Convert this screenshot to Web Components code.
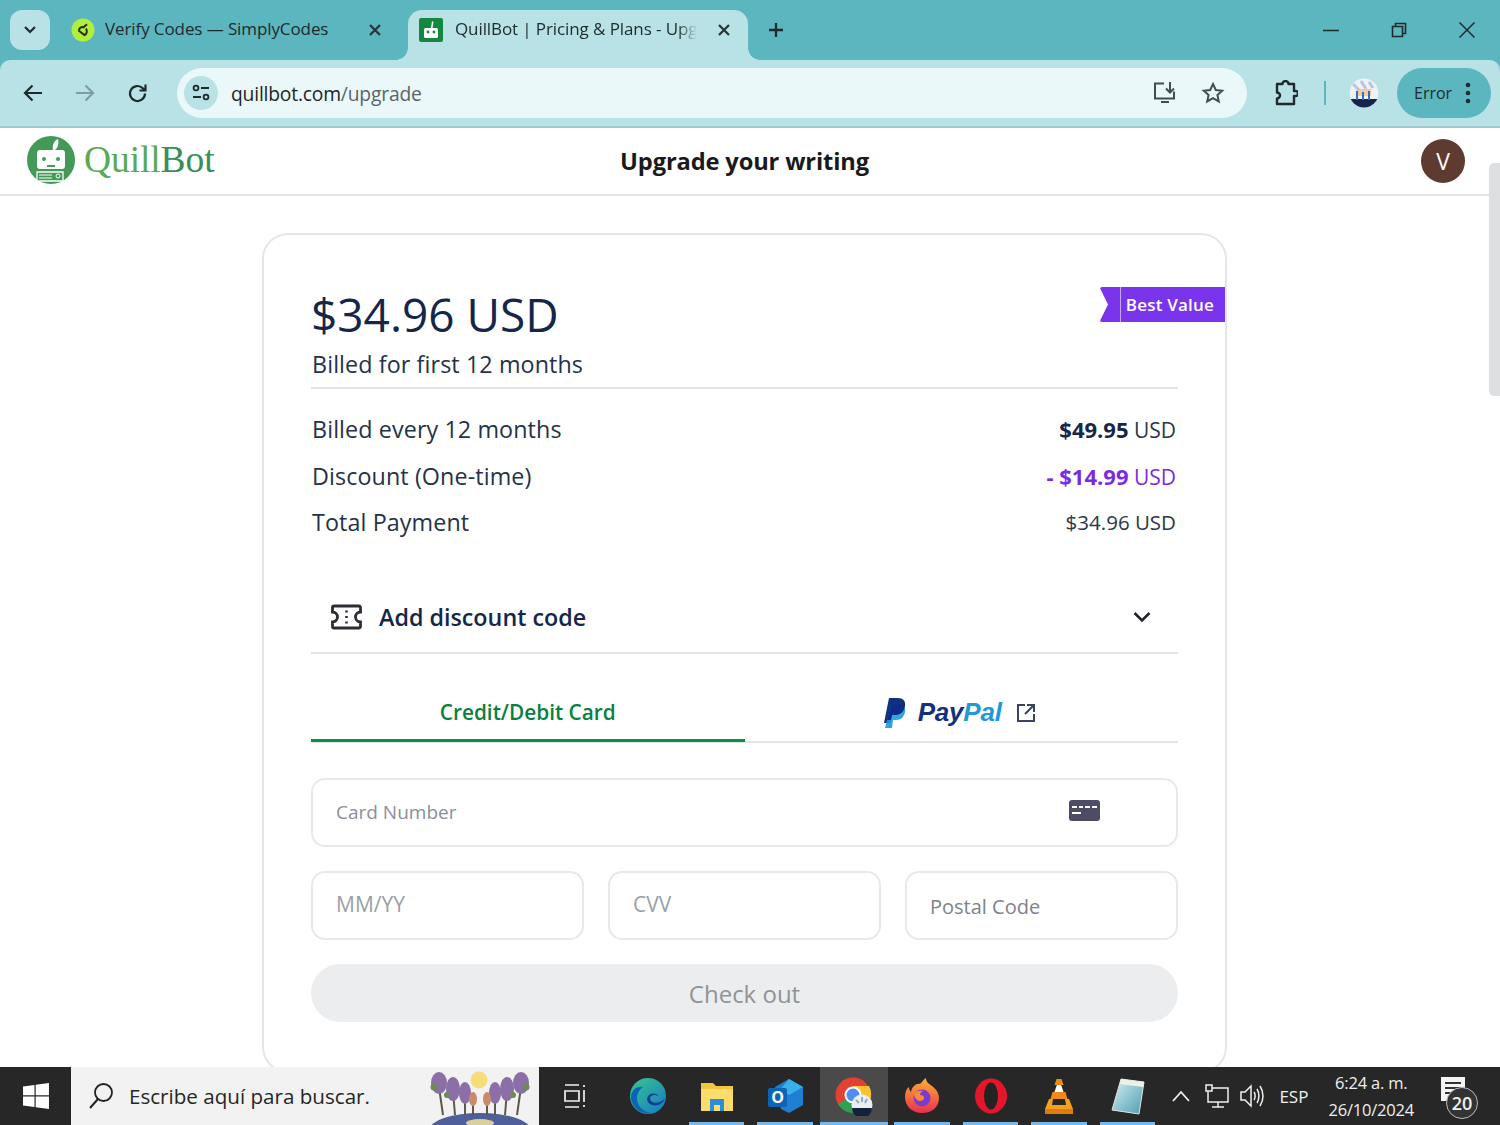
<!DOCTYPE html>
<html lang="es">
<head>
<meta charset="utf-8">
<title>QuillBot | Pricing & Plans</title>
<style>
  html, body { margin: 0; height: 100%; overflow: hidden; }
  body { display: flex; flex-direction: column; height: 1125px; font-family: "Open Sans", "Noto Sans", sans-serif; background: #fff; }
</style>
</head>
<body>
<chrome-tabs></chrome-tabs>
<chrome-toolbar></chrome-toolbar>
<page-view>
  <quill-header></quill-header>
  <checkout-card></checkout-card>
</page-view>
<win-taskbar></win-taskbar>

<script>
class ChromeTabs extends HTMLElement {
    constructor(){
        super()
        this.attachShadow({mode: 'open'})
        this.shadowRoot.innerHTML = `
        <style>
        :host{ display:flex; align-items:flex-end; height:60px; color:#1f2a2c; font-size:17px; font-family:"Open Sans",sans-serif; flex:none; position:relative; z-index:1; background:#5cb6c0; }
        .menu{ width:40px; height:40px; margin:0 0 10px 10px; border-radius:12px; background:#b8e2e6; display:flex; align-items:center; justify-content:center; flex:none; }
        .tab{ display:flex; align-items:center; height:50px; flex:none; box-sizing:border-box; padding-bottom:10px; }
        .tab span{ white-space:nowrap; overflow:hidden; letter-spacing:-.1px; margin-top:-3px; }
        .one{ width:358px; padding-left:21px; }
        .one span{ width:225px; margin-left:10px; }
        .one .x{ margin-left:38px; }
        .two{ width:340px; padding-left:11px; background:#b8e2e6; border-radius:14px 14px 0 0; position:relative; }
        .two::before, .two::after{ content:""; position:absolute; bottom:0; width:12px; height:12px; }
        .two::before{ left:-12px; background:radial-gradient(circle at 0 0, #5cb6c0 11.500px, #b8e2e6 12px); }
        .two::after{ right:-12px; background:radial-gradient(circle at 100% 0, #5cb6c0 11.500px, #b8e2e6 12px); }
        .two span{ width:242px; margin-left:12px; -webkit-mask-image:linear-gradient(90deg,#000 92%,transparent); mask-image:linear-gradient(90deg,#000 92%,transparent); }
        .two .x{ margin-left:20px; }
        .x{ flex:none; }
        .plus{ margin:0 0 22px 20px; flex:none; }
        .win{ margin-left:auto; display:flex; align-items:center; gap:52px; padding:0 25px 22px 0; }
        svg{ display:block; flex:none; }
        </style>
        <div class="menu"><svg width="14" height="10" viewBox="0 0 14 10"><path d="M2 2l5 5 5-5" fill="none" stroke="#1f2a2c" stroke-width="2.200"/></svg></div>
        <div class="tab one">
            <svg width="24" height="24" viewBox="0 0 24 24"><circle cx="12" cy="12" r="11.500" fill="#b2ee3c"/><path d="M8 12.500c0-2.500 2.500-4 4.500-3.200l3.500-3" fill="none" stroke="#243015" stroke-width="2"/><path d="M7.500 12.500l6 4.500c2.500-1 3-4 1.500-6.500" fill="none" stroke="#243015" stroke-width="2"/></svg>
            <span>Verify Codes — SimplyCodes</span>
            <svg class="x" width="14" height="14" viewBox="0 0 14 14"><path d="M2 2l10 10M12 2L2 12" stroke="#2b3436" stroke-width="2.300"/></svg>
        </div>
        <div class="tab two">
            <svg width="24" height="24" viewBox="0 0 24 24"><rect width="24" height="24" rx="2" fill="#14883f"/><rect x="5" y="10" width="14" height="10" rx="1.500" fill="#fff"/><path d="M12 10l1-7 1.500 1-1 6z" fill="#fff"/><circle cx="9" cy="14" r="1.400" fill="#14883f"/><circle cx="15" cy="14" r="1.400" fill="#14883f"/></svg>
            <span>QuillBot | Pricing &amp; Plans - Upg</span>
            <svg class="x" width="14" height="14" viewBox="0 0 14 14"><path d="M2 2l10 10M12 2L2 12" stroke="#2b3436" stroke-width="2.300"/></svg>
        </div>
        <svg class="plus" width="16" height="16" viewBox="0 0 16 16"><path d="M8 1v14M1 8h14" stroke="#1f2a2c" stroke-width="2.300"/></svg>
        <div class="win">
            <svg width="16" height="16" viewBox="0 0 16 16"><path d="M0 8.500h16" stroke="#1f2a2c" stroke-width="1.500"/></svg>
            <svg width="16" height="16" viewBox="0 0 16 16"><path d="M1.500 4.500h10v10h-10zM4.500 4.500V1.500h10v10h-3" fill="none" stroke="#1f2a2c" stroke-width="1.600"/></svg>
            <svg width="16" height="16" viewBox="0 0 16 16"><path d="M.5.5l15 15M15.500.5l-15 15" stroke="#1f2a2c" stroke-width="1.500"/></svg>
        </div>`
    }
}
customElements.define('chrome-tabs', ChromeTabs)

class ChromeToolbar extends HTMLElement {
    constructor(){
        super()
        this.attachShadow({mode: 'open'})
        this.shadowRoot.innerHTML = `
        <style>
        :host{ display:flex; align-items:center; height:68px; box-sizing:border-box; background:#b8e2e6; border-bottom:2px solid #a3c9d0; border-radius:10px 10px 0 0; box-shadow:0 -10px 0 #5cb6c0; padding:0 8px 0 22px; flex:none; font-family:"Open Sans",sans-serif; }
        svg{ display:block; flex:none; }
        .nav{ display:flex; gap:30px; align-items:center; }
        .reload{ margin-left:1px; }
        .bar{ margin-left:28px; width:1070px; height:50px; border-radius:25px; background:#ebf8f9; display:flex; align-items:center; padding:0 22px 0 7px; box-sizing:border-box; flex:none; }
        .site{ width:34px; height:34px; border-radius:50%; background:#b8e2e6; display:flex; align-items:center; justify-content:center; flex:none; }
        .url{ margin-left:13px; font-size:19.300px; color:#1e2426; letter-spacing:-.2px; }
        .url span{ color:#5b6567; }
        .end{ margin-left:auto; display:flex; align-items:center; gap:23px; }
        .right{ display:flex; align-items:center; margin-left:27px; }
        .sep{ width:2px; height:24px; background:#5cb6c0; margin:0 23px 0 26px; }
        .err{ margin-left:18px; width:94px; height:50px; border-radius:25px; background:#5cb6c0; display:flex; align-items:center; justify-content:space-between; padding:0 20px 0 17px; box-sizing:border-box; font-size:16px; color:#1f2a2c; }
        </style>
        <div class="nav">
            <svg width="22" height="20" viewBox="0 0 22 20"><path d="M20 10H3M10.500 2.500L3 10l7.500 7.500" fill="none" stroke="#1f2a2c" stroke-width="2.200"/></svg>
            <svg width="22" height="20" viewBox="0 0 22 20"><path d="M2 10h17M11.500 2.500L19 10l-7.500 7.500" fill="none" stroke="#7f9da2" stroke-width="2.200"/></svg>
            <svg class="reload" width="22" height="22" viewBox="0 0 22 22"><path d="M18 11.500a7.500 7.500 0 1 1-2.200-5.300L18 8.500M18.500 2.500v6h-6" fill="none" stroke="#1f2a2c" stroke-width="2.200"/></svg>
        </div>
        <div class="bar">
            <div class="site"><svg width="20" height="20" viewBox="0 0 20 20"><circle cx="5" cy="5" r="2.400" fill="none" stroke="#1f2a2c" stroke-width="1.800"/><path d="M10 5h8M2 14h8" stroke="#1f2a2c" stroke-width="1.800"/><circle cx="15" cy="14" r="2.400" fill="none" stroke="#1f2a2c" stroke-width="1.800"/></svg></div>
            <div class="url">quillbot.com<span>/upgrade</span></div>
            <div class="end">
                <svg width="26" height="26" viewBox="0 0 26 26"><path d="M12 3.500H3v15h19v-7M9 22h8" fill="none" stroke="#444c4e" stroke-width="2"/><path d="M18 2v10M14 8.500l4 4 4-4" fill="none" stroke="#444c4e" stroke-width="2"/></svg>
                <svg width="24" height="24" viewBox="0 0 24 24"><path d="M12 3l2.800 6 6.400.7-4.800 4.300 1.400 6.400L12 17.100l-5.800 3.300 1.400-6.400L2.800 9.700 9.200 9z" fill="none" stroke="#444c4e" stroke-width="2"/></svg>
            </div>
        </div>
        <div class="right">
            <svg width="24" height="26" viewBox="0 0 24 26"><path d="M3 4h5.500a3 3 0 0 1 6 0H20v7h1.500a2.500 2.500 0 0 1 0 5H20v8H3v-5.500a3 3 0 0 0 0-6z" fill="none" stroke="#1f2a2c" stroke-width="2.400" stroke-linejoin="round"/></svg>
            <div class="sep"></div>
            <svg width="30" height="30" viewBox="0 0 30 30"><defs><clipPath id="p"><circle cx="15" cy="15" r="14.500"/></clipPath></defs><g clip-path="url(#p)"><rect width="30" height="30" fill="#eef1f6"/><path d="M4 6l6 6M12 3l5 8M20 4l4 6" stroke="#b6c6de" stroke-width="3"/><rect x="8" y="11" width="14" height="7" fill="#f2b36b" opacity=".6"/><rect y="21" width="30" height="9" fill="#142450"/><path d="M8 13v9M14 14v8M20 13v9" stroke="#2f6fc0" stroke-width="2"/></g></svg>
            <div class="err">Error<svg width="6" height="22" viewBox="0 0 6 22"><circle cx="3" cy="3" r="2.300" fill="#1f2a2c"/><circle cx="3" cy="11" r="2.300" fill="#1f2a2c"/><circle cx="3" cy="19" r="2.300" fill="#1f2a2c"/></svg></div>
        </div>`
    }
}
customElements.define('chrome-toolbar', ChromeToolbar)

class PageView extends HTMLElement {
    constructor(){
        super()
        this.attachShadow({mode: 'open'})
        this.shadowRoot.innerHTML = `
        <style>
        :host{ display:flex; flex:none; height:939px; overflow:hidden; background:#fff; }
        .main{ width:1489px; flex:none; overflow:hidden; }
        .track{ flex:1; padding-top:35px; box-sizing:border-box; }
        .thumb{ height:233px; background:#dedfe1; border-radius:5px 0 0 5px; }
        </style>
        <div class="main"><slot></slot></div>
        <div class="track"><div class="thumb"></div></div>`
    }
}
customElements.define('page-view', PageView)

class QuillHeader extends HTMLElement {
    constructor(){
        super()
        this.attachShadow({mode: 'open'})
        this.shadowRoot.innerHTML = `
        <style>
        :host{ display:grid; grid-template-columns:1fr auto 1fr; align-items:center; height:68px; box-sizing:border-box; border-bottom:2px solid #e4e5e6; padding:0 24px 0 26px; }
        .logo{ display:flex; align-items:center; gap:8px; margin-top:-2px; }
        .word{ font-family:"Liberation Serif",serif; font-size:37.500px; line-height:1; letter-spacing:-.1px; color:#5aa956; }
        .word b{ font-weight:400; color:#3b8e5c; }
        h1{ margin:0 0 0 -2px; font-size:23.700px; font-weight:700; color:#1a1a1a; font-family:"Open Sans",sans-serif; letter-spacing:-.15px; }
        .avatar{ justify-self:end; width:44px; height:44px; border-radius:50%; background:#5e3a30; color:#fff; display:flex; align-items:center; justify-content:center; font-size:23px; }
        </style>
        <div class="logo">
            <svg width="50" height="50" viewBox="0 0 50 50"><circle cx="25" cy="25" r="24" fill="#429a56"/><path d="M27 15c-1-5 1-9 5-11 1 4 0 9-3 11z" fill="#fff"/><rect x="11" y="15" width="28" height="19" rx="3" fill="#fff"/><circle cx="18" cy="24" r="2" fill="#429a56"/><circle cx="32" cy="24" r="2" fill="#429a56"/><rect x="21" y="30" width="8" height="2" fill="#429a56"/><path d="M11 37h26v9H11z" fill="#429a56" stroke="#fff" stroke-width="1.300"/><circle cx="32" cy="41" r="2" fill="none" stroke="#fff"/><path d="M13 40h13M13 43h13" stroke="#fff"/></svg>
            <div class="word">Quill<b>Bot</b></div>
        </div>
        <h1>Upgrade your writing</h1>
        <div class="avatar">V</div>`
    }
}
customElements.define('quill-header', QuillHeader)

class PriceRow extends HTMLElement {
    constructor(){
        super()
        this.attachShadow({mode: 'open'})
        this.shadowRoot.innerHTML = `
        <style>
        :host{ display:flex; justify-content:space-between; align-items:center; height:46.500px; padding:0 2px 0 1px; color:#1b2a4a; }
        .l{ font-size:23.300px; color:#25324a; letter-spacing:.1px; }
        .r{ font-size:21px; color:#2b3648; }
        </style>
        <div class="l"><slot name="label"></slot></div>
        <div class="r"><slot name="value"></slot></div>`
    }
}
customElements.define('price-row', PriceRow)

class FieldBox extends HTMLElement {
    constructor(){
        super()
        this.attachShadow({mode: 'open'})
        this.shadowRoot.innerHTML = `
        <style>
        :host{ display:flex; align-items:center; justify-content:space-between; height:69px; box-sizing:border-box; border:2px solid #e8e9ea; border-radius:14px; padding:0 76px 0 23px; font-size:19px; color:#8a9098; }
        </style>
        <slot></slot><slot name="icon"></slot>`
    }
}
customElements.define('field-box', FieldBox)

class CheckoutCard extends HTMLElement {
    constructor(){
        super()
        this.attachShadow({mode: 'open'})
        this.shadowRoot.innerHTML = `
        <style>
        :host{ display:block; position:relative; box-sizing:border-box; width:965px; margin:37px 0 0 262px; height:840px; border:2px solid #e5e6e8; border-radius:26px; padding:47px 47px 0 47px; font-family:"Open Sans",sans-serif; color:#1b2a4a; }
        .badge{ position:absolute; top:52px; right:0; display:flex; height:35px; color:#fff; font-size:17px; font-weight:600; letter-spacing:.2px; }
        .badge svg{ display:block; }
        .badge div{ background:#7a35ec; border-left:1px solid #c9a8f8; padding:0 11px 0 5px; display:flex; align-items:center; }
        .price{ font-size:46px; line-height:64px; color:#16264a; }
        .sub{ font-size:23.300px; line-height:34px; color:#25324a; padding:1px 0 6px 1px; border-bottom:2px solid #e4e5e6; letter-spacing:.1px; }
        .rows{ padding-top:17px; }
        .usd{ color:#2b3648; }
        b{ font-weight:700; font-size:22px; color:#16264a; }
        .disc, .disc b{ color:#7a2be2; }
        .total{ font-size:20.500px; }
        .code{ display:flex; align-items:center; height:69px; padding:0 27px 3px 20px; box-sizing:border-box; margin-top:39.500px; border-bottom:2px solid #e4e5e6; font-size:23.300px; font-weight:600; color:#16264a; }
        .code span{ margin-left:17px; flex:1; }
        .tabs{ display:grid; grid-template-columns:1fr 1fr; height:87px; border-bottom:2px solid #e4e5e6; }
        .tab{ display:flex; align-items:center; justify-content:center; padding-top:30px; box-sizing:border-box; }
        .active{ color:#0a8040; font-size:20.800px; font-weight:600; border-bottom:3px solid #0a8f47; margin-bottom:-1px; }
        .pp{ gap:11px; padding:30px 4px 0 0; }
        .pptext{ font-family:"Liberation Sans",sans-serif; font-style:italic; font-weight:700; font-size:26px; color:#12307e; margin-left:0; margin-right:3px; letter-spacing:-.2px; }
        .pptext i{ color:#1f9ad6; }
        .fields{ display:grid; grid-template-columns:repeat(3,1fr); gap:24px 24px; margin-top:35px; }
        .wide{ grid-column:1 / 4; padding-bottom:2px; }
        .short{ font-size:21px; padding-bottom:4px; color:#9a9fa6; }
        .postal{ font-size:20px; color:#7d838b; padding-top:2px; }
        .card-icon{ margin-bottom:3px; }
        .btn{ margin-top:24px; height:58px; border-radius:29px; background:#ecedee; color:#8e9499; display:flex; align-items:center; justify-content:center; font-size:24px; }
        svg{ display:block; flex:none; }
        </style>
        <div class="badge">
            <svg width="21" height="35" viewBox="0 0 21 35"><path d="M3 0h18v35H3c-1.500 0-2.200-1-1.500-2.300L9 17.500 1.500 2.300C.8 1 1.500 0 3 0z" fill="#7a35ec"/></svg>
            <div>Best Value</div>
        </div>
        <div class="price">$34.96 USD</div>
        <div class="sub">Billed for first 12 months</div>
        <div class="rows">
            <price-row><span slot="label">Billed every 12 months</span><span slot="value"><b>$49.95</b> <span class="usd">USD</span></span></price-row>
            <price-row><span slot="label">Discount (One-time)</span><span slot="value" class="disc"><b>- $14.99</b> USD</span></price-row>
            <price-row><span slot="label">Total Payment</span><span slot="value" class="total">$34.96 USD</span></price-row>
        </div>
        <div class="code">
            <svg width="31" height="26" viewBox="0 0 31 26"><path d="M3 2h25a1.500 1.500 0 0 1 1.500 1.500V8a5 5 0 0 0 0 10v4.500A1.500 1.500 0 0 1 28 24H3a1.500 1.500 0 0 1-1.500-1.500V18a5 5 0 0 0 0-10V3.500A1.500 1.500 0 0 1 3 2z" fill="none" stroke="#2a2d33" stroke-width="2.800"/><path d="M15.500 6.500v2M15.500 12v2M15.500 17.500v2" stroke="#2a2d33" stroke-width="2.600"/></svg>
            <span>Add discount code</span>
            <svg width="18" height="12" viewBox="0 0 18 12"><path d="M1.500 2L9 9.500 16.500 2" fill="none" stroke="#22262c" stroke-width="2.600"/></svg>
        </div>
        <div class="tabs">
            <div class="tab active">Credit/Debit Card</div>
            <div class="tab pp">
                <svg width="24" height="30" viewBox="0 0 24 30"><path d="M6 0h9c5 0 8 3 7 8-1 6-5 9-10 9H9l-1.500 8H1z" fill="#12307e"/><path d="M8 7h8c4 0 7 2 6 7-1 5-4 8-9 8h-3l-1 8H2z" fill="#1f9ad6" opacity=".9"/><path d="M8 7h13c.5 1 .6 2 .4 3-1 4.500-5 7-9.400 7H9l-1 5H4z" fill="#0b2a8a"/></svg>
                <span class="pptext">Pay<i>Pal</i></span>
                <svg width="20" height="20" viewBox="0 0 20 20"><path d="M9 2H2v16h16v-7M11 2h7v7M18 2L9 11" fill="none" stroke="#3a4460" stroke-width="2"/></svg>
            </div>
        </div>
        <div class="fields">
            <field-box class="wide">Card Number
                <svg class="card-icon" slot="icon" width="31" height="21" viewBox="0 0 31 21"><rect width="31" height="21" rx="3" fill="#4d4b66"/><path d="M3 7h5M10 7h4M16 7h5M23 7h5M3 13h9" stroke="#fff" stroke-width="2"/></svg>
            </field-box>
            <field-box class="short">MM/YY</field-box>
            <field-box class="short">CVV</field-box>
            <field-box class="postal">Postal Code</field-box>
        </div>
        <div class="btn">Check out</div>`
    }
}
customElements.define('checkout-card', CheckoutCard)

class WinTaskbar extends HTMLElement {
    constructor(){
        super()
        this.attachShadow({mode: 'open'})
        this.shadowRoot.innerHTML = `
        <style>
        :host{ display:flex; align-items:stretch; height:58px; background:#272727; flex:none; font-family:"Open Sans",sans-serif; color:#f0f0f0; }
        .start{ width:71px; display:flex; align-items:center; justify-content:center; flex:none; }
        .search{ width:468px; background:#f2f2f2; display:flex; align-items:center; padding-left:17px; box-sizing:border-box; color:#262626; font-size:20.600px; flex:none; position:relative; overflow:hidden; }
        .search span{ margin-left:15px; }
        .search .art{ position:absolute; right:8px; bottom:0; }
        .view{ width:75px; padding-right:1px; box-sizing:border-box; display:flex; align-items:center; justify-content:center; flex:none; }
        .apps{ display:flex; }
        .app{ width:68.500px; display:flex; align-items:center; justify-content:center; position:relative; flex:none; }
        .on::after{ content:""; position:absolute; left:6px; right:7px; bottom:0; height:3px; background:#76b9ed; }
        .cur{ background:#4a4a4a; }
        .cur::after{ left:0; right:0; }
        .tray{ display:flex; align-items:center; margin-left:auto; font-size:17px; }
        .esp{ margin-left:14px; }
        .clock{ text-align:center; font-size:16.500px; line-height:27px; margin:0 26px 0 20px; letter-spacing:-.2px; }
        .note{ position:relative; width:34px; height:40px; margin-right:26px; }
        .note i{ position:absolute; right:-4px; bottom:-3px; width:32px; height:32px; border-radius:50%; border:1px solid #bbb; background:#333; font-style:normal; font-size:18px; font-weight:600; display:flex; align-items:center; justify-content:center; box-sizing:border-box; }
        svg{ display:block; flex:none; }
        </style>
        <div class="start"><svg width="26" height="26" viewBox="0 0 26 26"><path d="M0 3.500l11.500-1.600V12.300H0zM12.700 1.700L26 0v12.300H12.700zM0 13.500h11.500v10.600L0 22.500zM12.700 13.500H26V26l-13.300-1.800z" fill="#fff"/></svg></div>
        <div class="search">
            <svg width="26" height="28" viewBox="0 0 26 28"><circle cx="15.500" cy="10.500" r="8.500" fill="none" stroke="#222" stroke-width="1.800"/><path d="M10 17L2 26" stroke="#222" stroke-width="2"/></svg>
            <span>Escribe aquí para buscar.</span>
            <svg class="art" width="102" height="58" viewBox="0 0 102 58">
                <ellipse cx="51" cy="62" rx="50" ry="16" fill="#4e5f9c"/><ellipse cx="51" cy="56" rx="14" ry="4" fill="#d8cf9a"/>
                <circle cx="50" cy="13" r="8.500" fill="#f6dd77"/>
                <g stroke="#5e5a48" stroke-width="2"><path d="M10 20l4 28M24 24l2 24M36 26v22M44 34v14M58 34v14M66 26v22M78 24l-2 24M92 20l-4 28"/></g>
                <g fill="#8b6fa6"><ellipse cx="10" cy="16" rx="8" ry="11"/><ellipse cx="24" cy="22" rx="7" ry="12"/><ellipse cx="36" cy="26" rx="6" ry="11"/><ellipse cx="66" cy="26" rx="6" ry="11"/><ellipse cx="78" cy="22" rx="7" ry="12"/><ellipse cx="92" cy="16" rx="8" ry="11"/></g>
                <g fill="#c98a6a"><ellipse cx="44" cy="32" rx="4" ry="7"/><ellipse cx="58" cy="32" rx="4" ry="7"/></g>
                <g fill="#6f8a56"><circle cx="5" cy="20" r="3.500"/><circle cx="97" cy="20" r="3.500"/><circle cx="18" cy="28" r="3"/><circle cx="84" cy="28" r="3"/></g>
            </svg>
        </div>
        <div class="view"><svg width="26" height="24" viewBox="0 0 26 24"><path d="M2 1h14M2 23h14M2 7h14v10H2zM21 1v2M21 6v12M21 21v2" fill="none" stroke="#f0f0f0" stroke-width="1.700"/></svg></div>
        <div class="apps">
            <div class="app"><svg width="38" height="38" viewBox="0 0 38 38"><defs><linearGradient id="e" x1="0" y1="0" x2="1" y2="1"><stop offset="0" stop-color="#38c98a"/><stop offset="1" stop-color="#1479c9"/></linearGradient></defs><circle cx="19" cy="19" r="18" fill="url(#e)"/><path d="M36 22c-3 6-10 8-15 5-3-2-4-6-1-9 3-2 8-2 9 1-5-3-10 1-7 5 3 3 9 2 14-2z" fill="#0b3f8f"/><path d="M8 19c-1 8 5 16 14 17-8 2-18-4-20-14-1-7 5-14 12-12-3 2-5 5-6 9z" fill="#0c63b8"/></svg></div>
            <div class="app on"><svg width="32" height="30" viewBox="0 0 32 30"><path d="M0 2h12l3 3h17v25H0z" fill="#f3c53d"/><path d="M0 8h32v22H0z" fill="#fbdc6c"/><path d="M9 18h14v12h-4v-6h-6v6H9z" fill="#2a8fd6"/></svg></div>
            <div class="app on"><svg width="36" height="36" viewBox="0 0 36 36"><path d="M8 9l14-8 14 8v18l-14 8-8-4z" fill="#1f7fd1"/><path d="M22 1l14 8-14 8-9-5z" fill="#38b0ea"/><rect x="1" y="10" width="19" height="19" rx="2" fill="#0c64b8"/><text x="10.500" y="25" font-size="16" font-weight="700" fill="#fff" text-anchor="middle" font-family="Open Sans">O</text></svg></div>
            <div class="app on cur"><svg width="38" height="40" viewBox="0 0 38 40"><circle cx="18" cy="19" r="17.500" fill="#e34133"/><path d="M18 19L3 28a17.500 17.500 0 0 0 17 9z" fill="#2fa04e"/><path d="M18 10h16a17.500 17.500 0 0 1-10 25z" fill="#f5c431"/><circle cx="18" cy="19" r="8.500" fill="#fff"/><circle cx="18" cy="19" r="6.500" fill="#4d8ef0"/><circle cx="27" cy="29" r="10.500" fill="#e9eef4"/><path d="M21 24l3 3M27 21v5M32 23l-2 4" stroke="#93a9c8" stroke-width="2"/><path d="M17 32h20a10 10 0 0 1-20 0z" fill="#13213f"/></svg></div>
            <div class="app on"><svg width="36" height="36" viewBox="0 0 36 36"><defs><linearGradient id="f" x1="0" y1="0" x2="0" y2="1"><stop offset="0" stop-color="#ffb22e"/><stop offset="1" stop-color="#e8304f"/></linearGradient></defs><path d="M18 35C8 35 1 28 1 19c0-4 1-8 4-10 0 3 1 4 2 5 1-6 6-9 9-8 3-3 4-5 6-6 0 4 2 5 6 8 4 3 7 7 7 12 0 9-7 15-17 15z" fill="url(#f)"/><circle cx="18" cy="20" r="8.500" fill="#7b3bd0"/><path d="M10 16c2-3 6-4 9-3-2 1-3 2-3 4 4 0 5 3 3 5-3 2-8 1-9-6z" fill="#ff8a2e"/></svg></div>
            <div class="app on"><svg width="34" height="36" viewBox="0 0 34 36"><ellipse cx="17" cy="18" rx="16" ry="17.500" fill="#e3162c"/><ellipse cx="17" cy="18" rx="7" ry="13.500" fill="#232323"/></svg></div>
            <div class="app on"><svg width="30" height="36" viewBox="0 0 30 36"><path d="M15 1l6 17H9z" fill="#fff"/><path d="M12.500 1h5l2 6H10.500zM8.500 14h13l2 7H6.500z" fill="#f08a16"/><path d="M5 21h4l-1 6h14l-1-6h4l4 10v4H1v-4z" fill="#f4a11f"/><path d="M1 31h28v5H1z" fill="#e27b0e"/></svg></div>
            <div class="app on"><svg width="36" height="38" viewBox="0 0 36 38"><defs><linearGradient id="n" x1="0" y1="0" x2="1" y2="1"><stop offset="0" stop-color="#d8f0f6"/><stop offset="1" stop-color="#4b9cb0"/></linearGradient></defs><path d="M11 2l23 3-5 32L2 33z" fill="url(#n)" stroke="#dfe6e8"/><path d="M11 2l23 3-1 5-23-3z" fill="#ecf1e6"/></svg></div>
        </div>
        <div class="tray">
            <svg width="20" height="12" viewBox="0 0 20 12"><path d="M2 11l8-9 8 9" fill="none" stroke="#f0f0f0" stroke-width="1.800"/></svg>
            <svg width="26" height="26" viewBox="0 0 26 26" style="margin-left:13px"><path d="M2 2h6v6H2zM8 5h16v14H8M4 8v11h4M14 19v5M8 24h12" fill="none" stroke="#f0f0f0" stroke-width="1.500"/></svg>
            <svg width="26" height="24" viewBox="0 0 26 24" style="margin-left:9px"><path d="M2 8h4l6-6v20l-6-6H2zM15 8c1.500 2 1.500 6 0 8M18 5c2.500 4 2.500 10 0 14M21 2c4 6 4 14 0 20" fill="none" stroke="#f0f0f0" stroke-width="1.500"/></svg>
            <div class="esp">ESP</div>
            <div class="clock">6:24 a. m.<br>26/10/2024</div>
            <div class="note"><svg width="26" height="30" viewBox="0 0 26 30"><path d="M1 1h24v24H12l-5 5v-5H1z" fill="#f4f4f4"/><path d="M5 7h16M5 12h16M5 17h16" stroke="#333" stroke-width="2"/></svg><i>20</i></div>
        </div>`
    }
}
customElements.define('win-taskbar', WinTaskbar)
</script>
</body>
</html>
